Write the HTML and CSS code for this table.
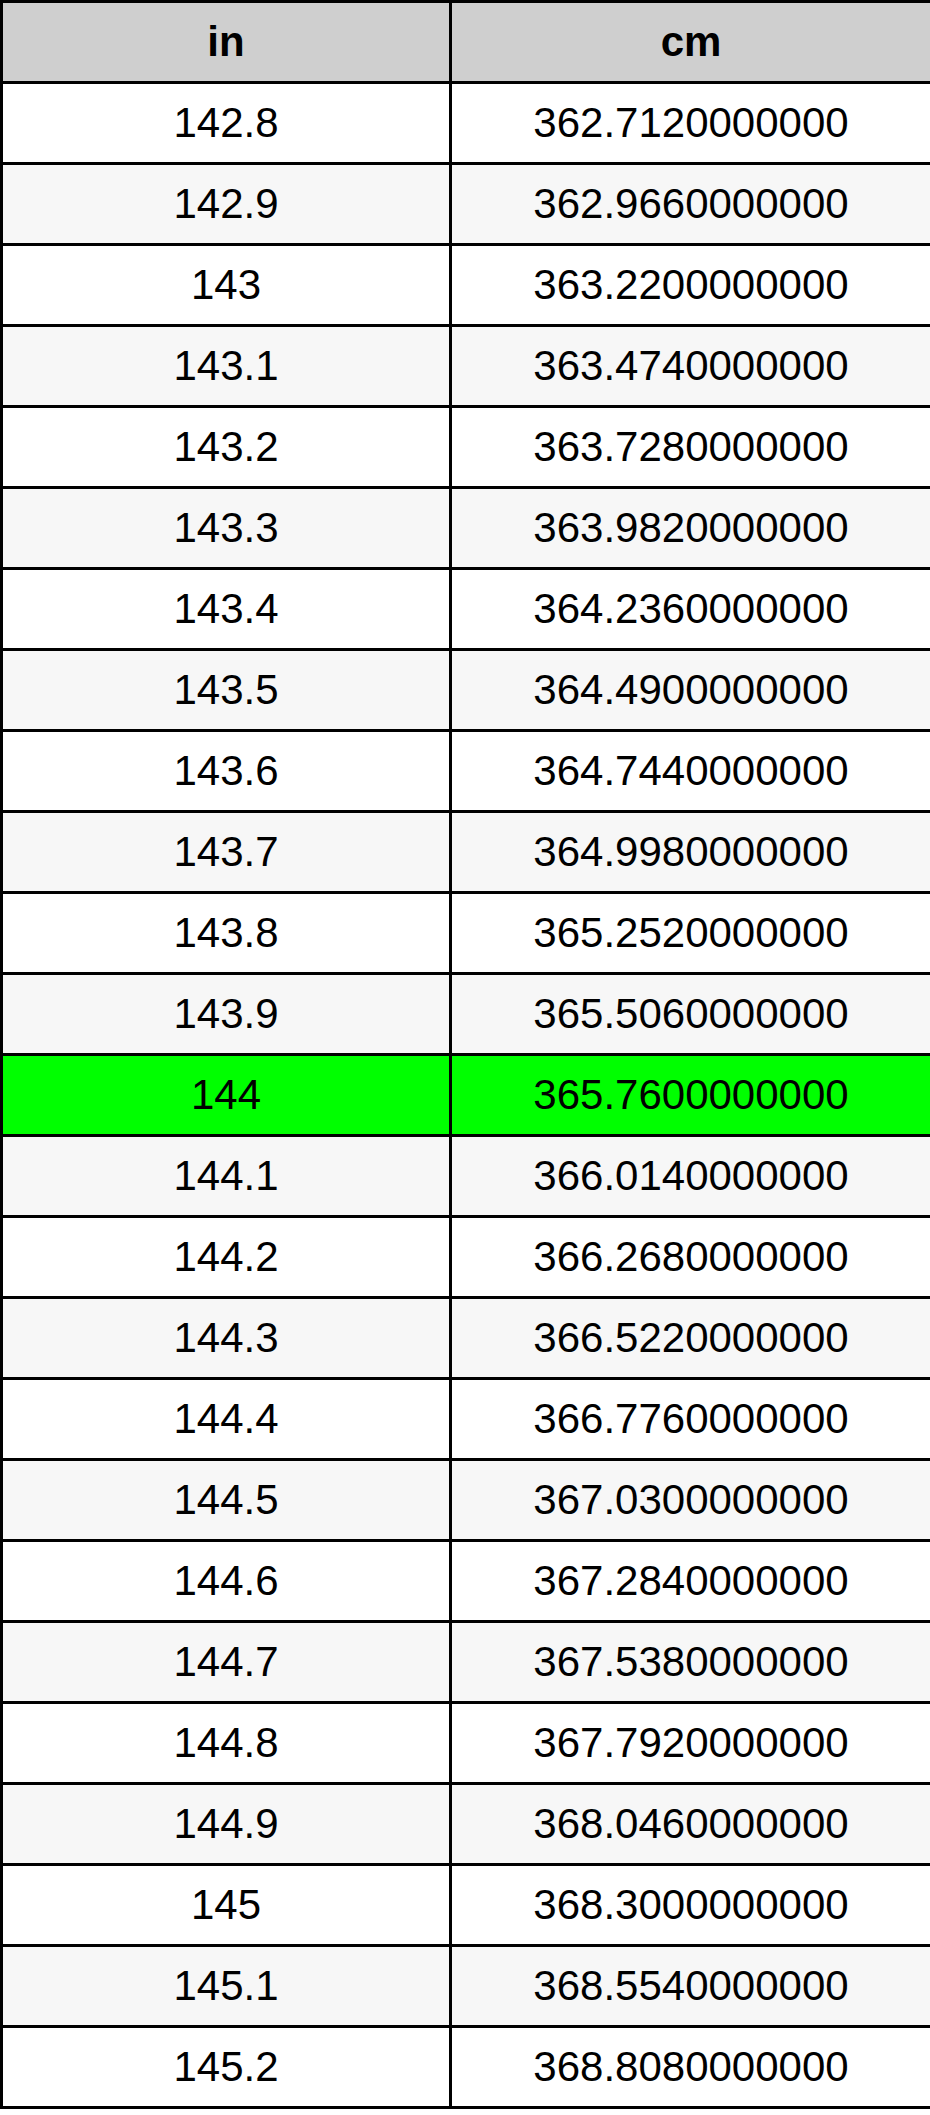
FILE: index.html
```html
<!DOCTYPE html>
<html>
<head>
<meta charset="utf-8">
<link rel="stylesheet" href="styles.css">
</head>
<body>
<table class="conv">
<colgroup><col class="c-in"><col class="c-cm"></colgroup>
<thead><tr><th>in</th><th>cm</th></tr></thead>
<tbody>
<tr><td>142.8</td><td>362.7120000000</td></tr>
<tr><td>142.9</td><td>362.9660000000</td></tr>
<tr><td>143</td><td>363.2200000000</td></tr>
<tr><td>143.1</td><td>363.4740000000</td></tr>
<tr><td>143.2</td><td>363.7280000000</td></tr>
<tr><td>143.3</td><td>363.9820000000</td></tr>
<tr><td>143.4</td><td>364.2360000000</td></tr>
<tr><td>143.5</td><td>364.4900000000</td></tr>
<tr><td>143.6</td><td>364.7440000000</td></tr>
<tr><td>143.7</td><td>364.9980000000</td></tr>
<tr><td>143.8</td><td>365.2520000000</td></tr>
<tr><td>143.9</td><td>365.5060000000</td></tr>
<tr class="hl"><td>144</td><td>365.7600000000</td></tr>
<tr><td>144.1</td><td>366.0140000000</td></tr>
<tr><td>144.2</td><td>366.2680000000</td></tr>
<tr><td>144.3</td><td>366.5220000000</td></tr>
<tr><td>144.4</td><td>366.7760000000</td></tr>
<tr><td>144.5</td><td>367.0300000000</td></tr>
<tr><td>144.6</td><td>367.2840000000</td></tr>
<tr><td>144.7</td><td>367.5380000000</td></tr>
<tr><td>144.8</td><td>367.7920000000</td></tr>
<tr><td>144.9</td><td>368.0460000000</td></tr>
<tr><td>145</td><td>368.3000000000</td></tr>
<tr><td>145.1</td><td>368.5540000000</td></tr>
<tr><td>145.2</td><td>368.8080000000</td></tr>
</tbody>
</table>
</body>
</html>
```

FILE: styles.css
```css
html, body {
  margin: 0;
  padding: 0;
  background: #ffffff;
}

.conv {
  width: 930px;
  border-collapse: collapse;
  table-layout: fixed;
  font-family: "Liberation Sans", Arial, sans-serif;
  font-size: 42px;
  color: #000000;
}

.c-in {
  width: 449px;
}

.c-cm {
  width: 481px;
}

.conv th,
.conv td {
  border: 3px solid #000000;
  height: 78px;
  padding: 0;
  text-align: center;
  vertical-align: middle;
  line-height: 78px;
}

.conv th {
  background: #cfcfcf;
  font-weight: bold;
}

.conv tbody tr:nth-child(even) td {
  background: #f7f7f7;
}

.conv tbody tr.hl td {
  background: #00ff00;
}
```
